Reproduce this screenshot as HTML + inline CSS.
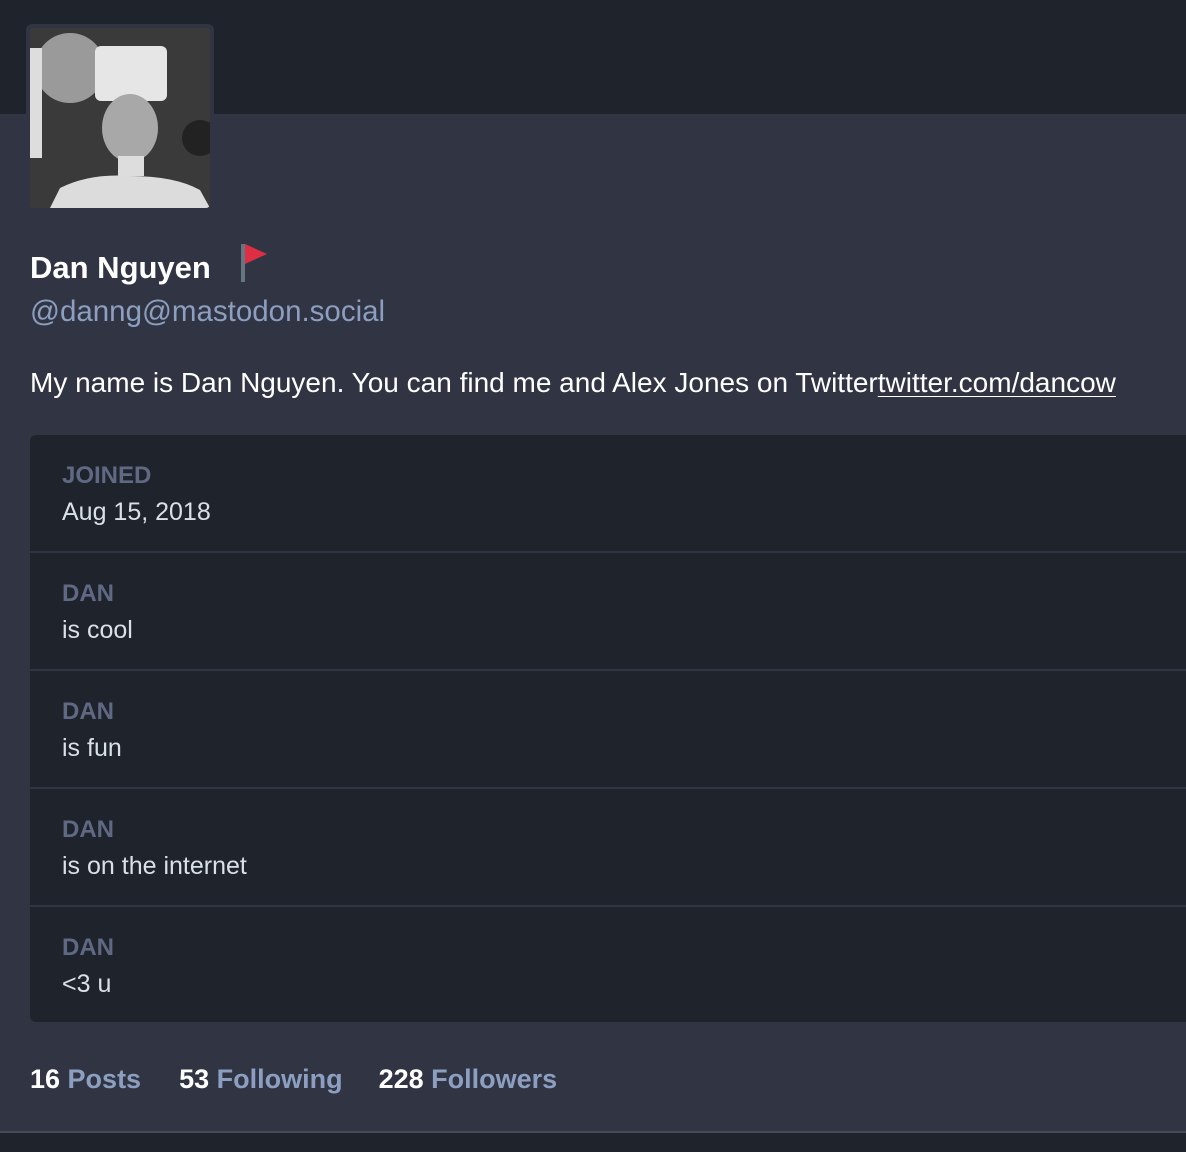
<!DOCTYPE html>
<html><head><meta charset="utf-8"><style>
*{margin:0;padding:0;box-sizing:border-box}
body{width:1186px;height:1152px;overflow:hidden;background:#313543;font-family:"Liberation Sans",sans-serif;position:relative}
.top{position:absolute;left:0;top:0;width:1186px;height:114px;background:#1f232b}
.avb{position:absolute;left:26px;top:24px;width:188px;height:188px;background:#313543;border-radius:6px}
.av{position:absolute;left:30px;top:28px;width:180px;height:180px;border-radius:4px;overflow:hidden;background:#5a5a5a}
.name{position:absolute;left:30px;top:242px;font-size:31px;font-weight:bold;color:#fff}
.handle{position:absolute;left:30px;top:295px;font-size:29.5px;color:#8c9fc0}
.bio{position:absolute;left:30px;top:367px;font-size:28px;color:#fff;white-space:nowrap}
.bio u{text-decoration:underline;text-underline-offset:4px;text-decoration-thickness:1px}
.card{position:absolute;left:30px;top:435px;width:1170px;height:587px;background:#1f232b;border-radius:6px;overflow:hidden}
.row{height:118px;border-bottom:2px solid #313543;padding:26px 0 0 32px}
.row:last-child{border-bottom:none}
.l{font-size:24px;font-weight:bold;color:#606984;line-height:30px}
.v{font-size:25px;color:#d9e1e8;line-height:42px}
.stats{position:absolute;left:30px;top:1064px;font-size:27px;font-weight:bold;color:#8c9fc0;white-space:nowrap}
.stats b{color:#fff}
.line{position:absolute;left:0;top:1131px;width:1186px;height:2px;background:#444a5c}
.bot{position:absolute;left:0;top:1133px;width:1186px;height:19px;background:#1f232b}
</style></head><body>
<div class="top"></div>
<div class="avb"></div>
<div class="av"><svg width="180" height="180" viewBox="0 0 180 180">
<rect width="180" height="180" fill="#3a3a3a"/>
<circle cx="40" cy="40" r="35" fill="#9a9a9a"/>
<rect x="0" y="20" width="12" height="110" fill="#ddd"/>
<circle cx="170" cy="110" r="18" fill="#222"/>
<rect x="65" y="18" width="72" height="55" rx="6" fill="#e6e6e6"/>
<ellipse cx="100" cy="100" rx="28" ry="34" fill="#a8a8a8"/>
<rect x="88" y="128" width="26" height="20" fill="#ddd"/>
<path d="M20 180 L30 160 Q60 145 100 148 Q145 148 170 162 L180 180 Z" fill="#dcdcdc"/>
</svg></div>
<div class="name">Dan Nguyen <span style="display:inline-block;margin-left:16px;vertical-align:-6px"><svg width="34" height="42" viewBox="0 0 34 42"><rect x="6" y="2" width="4" height="38" fill="#66757f"/><path d="M10 2 L32 12 L10 22 Z" fill="#dd2e44"/></svg></span></div>
<div class="handle">@danng@mastodon.social</div>
<div class="bio">My name is Dan Nguyen. You can find me and Alex Jones on Twitter<u>twitter.com/dancow</u></div>
<div class="card">
<div class="row"><div class="l">JOINED</div><div class="v">Aug 15, 2018</div></div>
<div class="row"><div class="l">DAN</div><div class="v">is cool</div></div>
<div class="row"><div class="l">DAN</div><div class="v">is fun</div></div>
<div class="row"><div class="l">DAN</div><div class="v">is on the internet</div></div>
<div class="row"><div class="l">DAN</div><div class="v">&lt;3 u</div></div>
</div>
<div class="stats"><b>16</b> Posts<span style="display:inline-block;width:38px"></span><b>53</b> Following<span style="display:inline-block;width:36px"></span><b>228</b> Followers</div>
<div class="line"></div>
<div class="bot"></div>
</body></html>
